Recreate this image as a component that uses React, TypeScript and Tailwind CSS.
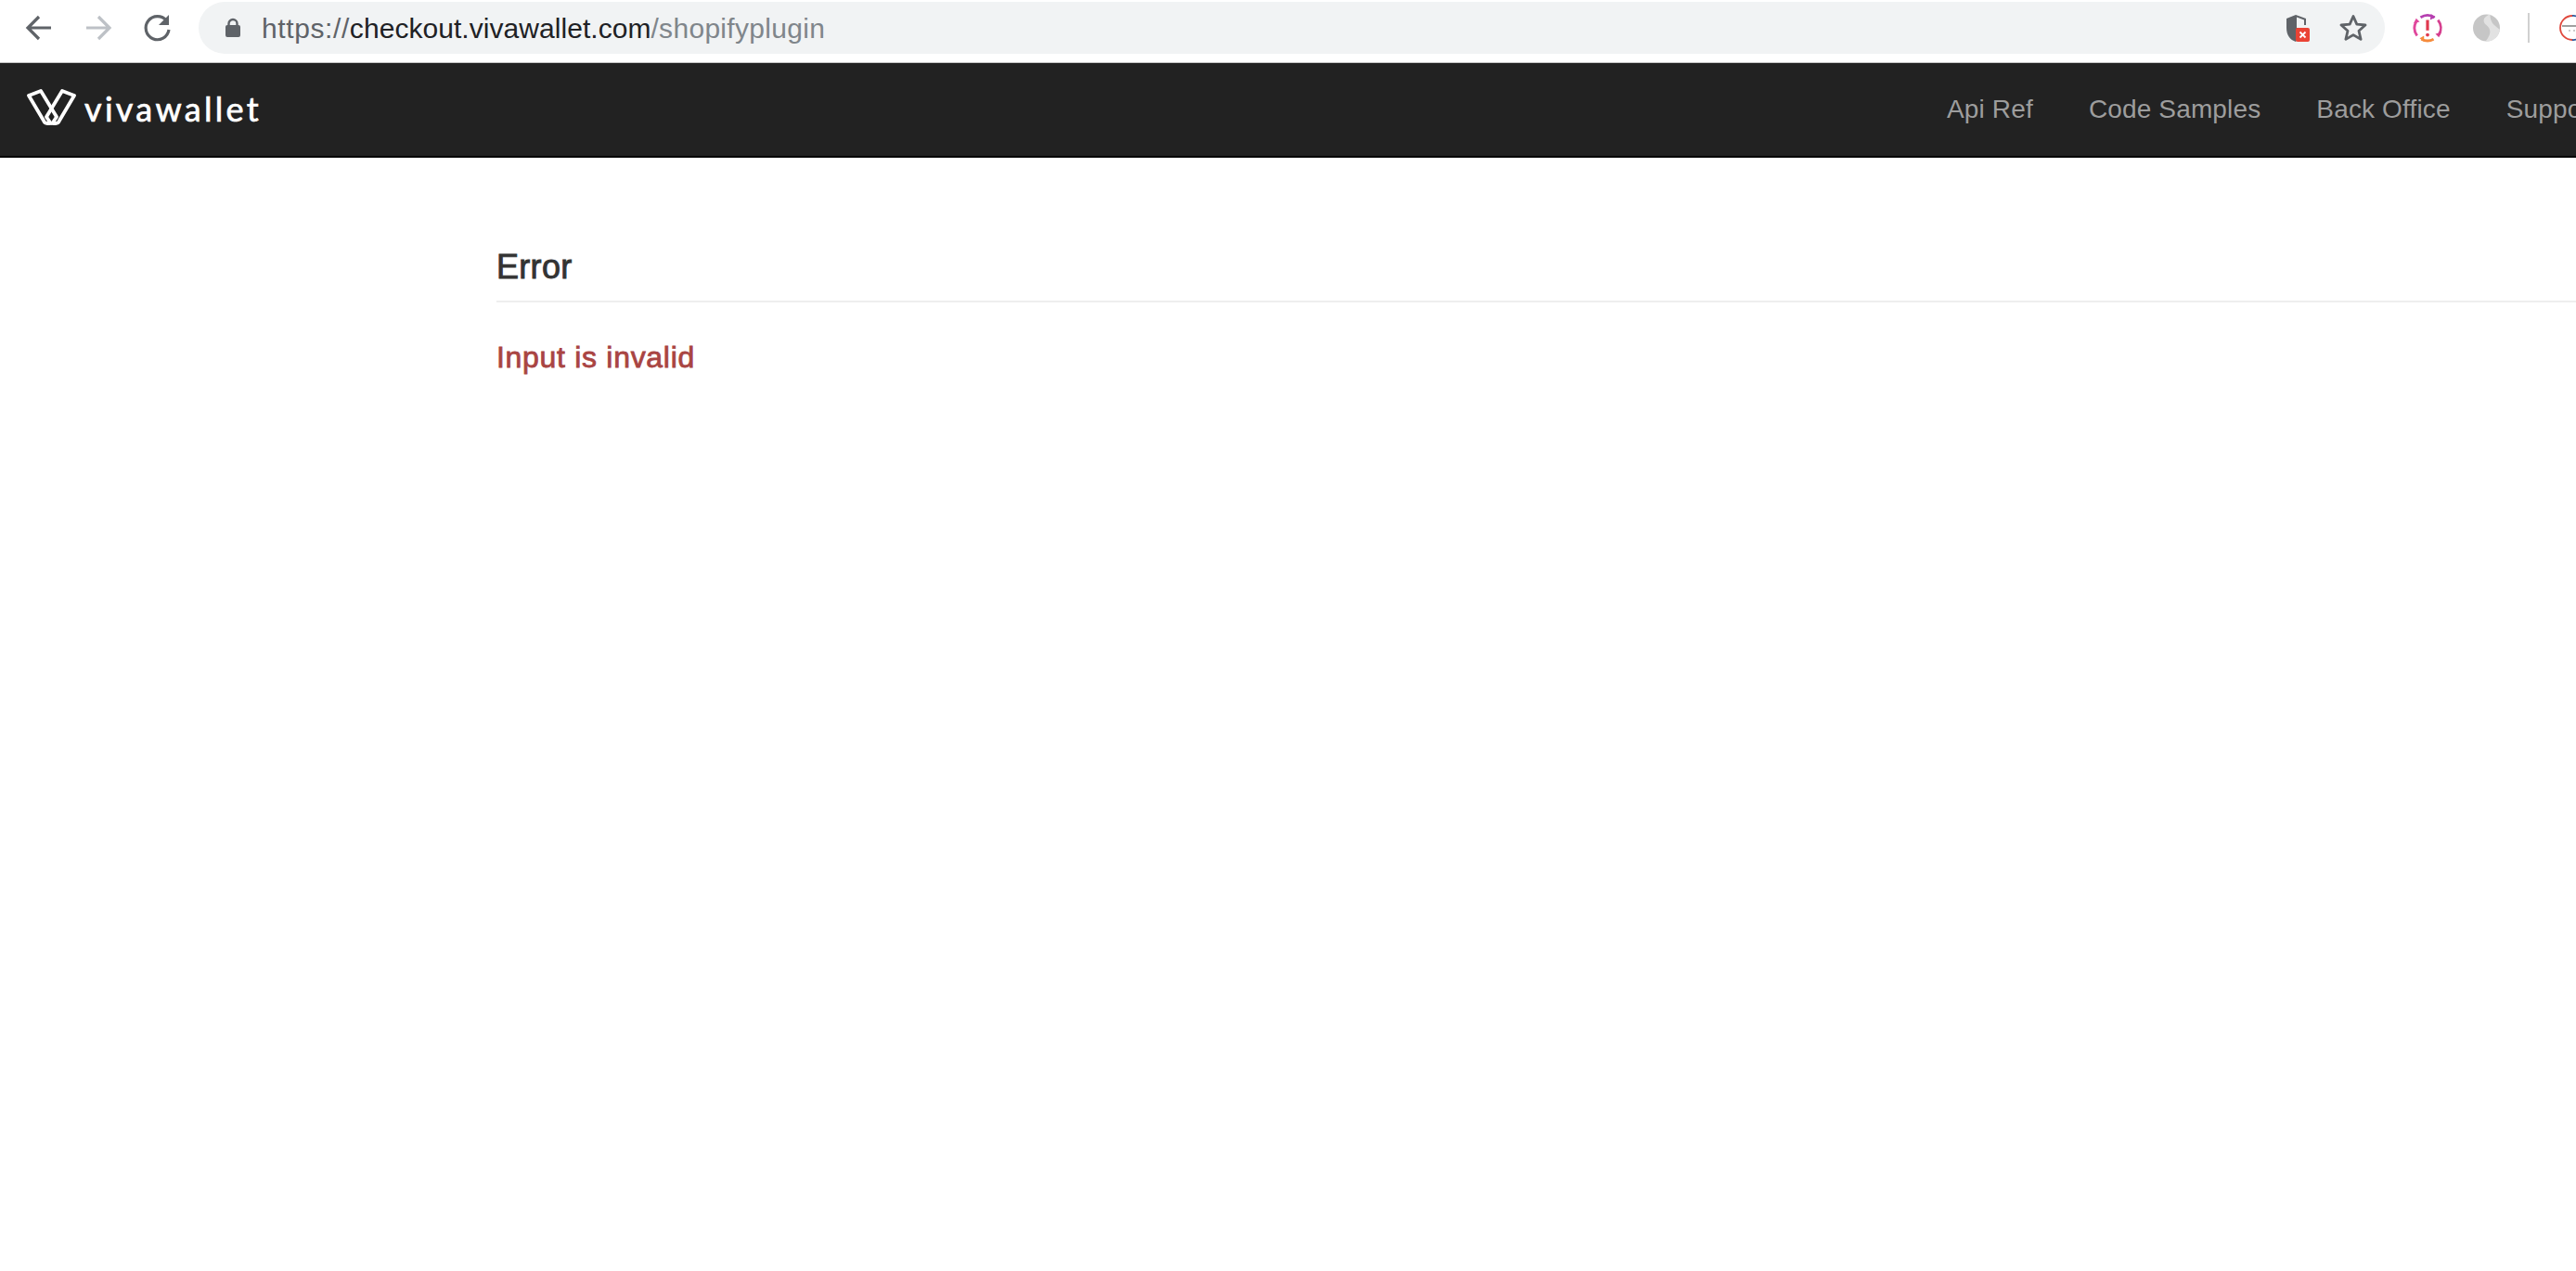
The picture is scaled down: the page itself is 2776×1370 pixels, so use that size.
import React from 'react';

const sans = { fontFamily: '"Liberation Sans", Arial, sans-serif' };

const Toolbar = () => (
  <div className="flex h-[67px] items-center bg-white pb-[7px]">
    <svg width="34" height="34" viewBox="0 0 34 34" className="ml-[25px] shrink-0" fill="none" stroke="#5f6368" strokeWidth="3.2">
      <path d="M30 17H6M17 5L5 17l12 12" />
    </svg>
    <svg width="34" height="34" viewBox="0 0 34 34" className="ml-[30px] shrink-0" fill="none" stroke="#bdc1c6" strokeWidth="3.2">
      <path d="M4 17h24M17 5l12 12-12 12" />
    </svg>
    <svg width="34" height="34" viewBox="0 0 34 34" className="ml-[30px] shrink-0" fill="none" stroke="#5f6368" strokeWidth="3.2">
      <path d="M26.5 9.5A12.5 12.5 0 1 0 29 19" />
      <path d="M29 3v11H18z" fill="#5f6368" stroke="none" />
    </svg>
    <div className="ml-[27px] flex h-[56px] w-[2356px] shrink-0 items-center rounded-full bg-[#f1f3f4]">
      <svg width="18" height="22" viewBox="0 0 18 22" className="ml-[28px] shrink-0" fill="none">
        <path d="M4.5 9V6.5a4.5 4.5 0 0 1 9 0V9" stroke="#5f6368" strokeWidth="2.4" />
        <rect x="1" y="8" width="16" height="13" rx="2" fill="#5f6368" />
      </svg>
      <div className="ml-[22px] text-[30px] tracking-[0.6px] text-[#5f6368]" style={sans}>
        https://<span className="tracking-[0.05px] text-[#202124]">checkout.vivawallet.com</span>
        <span className="tracking-[0.3px] text-[#80868b]">/shopifyplugin</span>
      </div>
      <svg width="30" height="32" viewBox="0 0 30 32" className="ml-auto mt-[2px] shrink-0">
        <path d="M12 1l11 4v7h-2V6.5L13 3.6V15h2v11l-3 4C6 28 2 23 2 15V5z" fill="#5f6368" />
        <rect x="12" y="15" width="15" height="15" rx="2" fill="#ea4335" />
        <path d="M16.5 19.5l6 6M22.5 19.5l-6 6" stroke="#fff" strokeWidth="1.8" />
      </svg>
      <svg width="32" height="32" viewBox="0 0 32 32" className="ml-[28px] mr-[18px] shrink-0" fill="none" stroke="#5f6368" strokeWidth="2.8">
        <path d="M16 3.5l3.8 8.6 9.2.9-7 6.2 2.1 9.2-8.1-4.8-8.1 4.8 2.1-9.2-7-6.2 9.2-.9z" strokeLinejoin="round" />
      </svg>
    </div>
    <svg width="32" height="32" viewBox="0 0 34 34" className="ml-[30px] shrink-0" fill="none" strokeWidth="3">
      <path d="M9 5a15 15 0 0 1 16 0" stroke="#b63fb0" />
      <path d="M21 1l5 4-6 3z" fill="#b63fb0" />
      <path d="M29 8a15 15 0 0 1 1 17" stroke="#d63f8f" />
      <path d="M33 22l-3 6-4-4z" fill="#d63f8f" />
      <path d="M24 30a15 15 0 0 1-14 0" stroke="#f58b3c" />
      <path d="M13 26l-5 3 5 4z" fill="#f58b3c" />
      <path d="M5 26A15 15 0 0 1 4 10" stroke="#e0479c" />
      <path d="M1 12l3-6 4 4z" fill="#e0479c" />
      <path d="M17 8v12" stroke="#e0394f" strokeWidth="3.4" />
      <circle cx="17" cy="25" r="2" fill="#e0394f" />
    </svg>
    <svg width="29" height="30" viewBox="0 0 30 30" className="ml-[33px] shrink-0">
      <circle cx="15" cy="15" r="15" fill="#c6c6c6" />
      <path d="M19 0c-6 2-10 7-4 12s5 11-1 18c8 1 15-5 16-13-5-4-11-7-11-17z" fill="#e2e2e2" />
    </svg>
    <div className="ml-[30px] h-[32px] w-[2px] shrink-0 bg-[#d0d0d0]" />
    <svg width="34" height="30" viewBox="0 0 34 30" className="ml-[32px] shrink-0" fill="none" strokeWidth="1.8">
      <path d="M14 2A13 13 0 0 0 14 28" stroke="#e0483c" />
      <path d="M14 2a13 13 0 0 1 13 8" stroke="#2c5a9e" />
      <path d="M14 28a13 13 0 0 0 13-8" stroke="#2c5a9e" />
      <path d="M3 13h28" stroke="#777" strokeWidth="1.4" />
      <path d="M10 18h20" stroke="#999" strokeWidth="1.2" strokeDasharray="2 3" />
    </svg>
  </div>
);

const Navbar = () => (
  <div className="flex h-[103px] items-center overflow-hidden border-t border-b-2 border-t-[#c4c4c4] border-b-black bg-[#222222]">
    <svg width="54" height="40" viewBox="0 0 54 40" className="mb-[5px] ml-[29px] shrink-0" fill="none" stroke="#fff" strokeWidth="3.8" strokeLinejoin="round">
      <path d="M2 7L15 2 32 30l-4 6q-1 1-4 1h-2q-3 0-4-3z" />
      <path d="M51 7L38 2 21 30l4 6q1 1 4 1h2q3 0 4-3z" />
    </svg>
    <div
      className="mb-[2px] ml-[8px] w-[191px] shrink-0 text-[36px] leading-none tracking-[3.3px] text-white [-webkit-text-stroke:0.7px_#ffffff]"
      style={{ fontFamily: 'Lato, sans-serif' }}
    >
      vivawallet
    </div>
    <div className="ml-[1816px] flex shrink-0 gap-[60px] text-[28px] tracking-[0.15px] text-[#9d9d9d]" style={sans}>
      <span>Api Ref</span>
      <span>Code Samples</span>
      <span>Back Office</span>
      <span>Support</span>
    </div>
  </div>
);

export default function App() {
  return (
    <div className="h-screen overflow-hidden bg-white" style={sans}>
      <Toolbar />
      <Navbar />
      <div className="pl-[535px]">
        <h1 className="mt-[98px] border-b-2 border-[#eeeeee] pb-[16px] text-[36px] leading-[40px] tracking-[0.3px] text-[#333333] [-webkit-text-stroke:0.9px_#333333]">
          Error
        </h1>
        <p className="mt-[39px] text-[32px] leading-[40px] tracking-[0.7px] text-[#a94442] [-webkit-text-stroke:0.8px_#a94442]">
          Input is invalid
        </p>
      </div>
    </div>
  );
}
